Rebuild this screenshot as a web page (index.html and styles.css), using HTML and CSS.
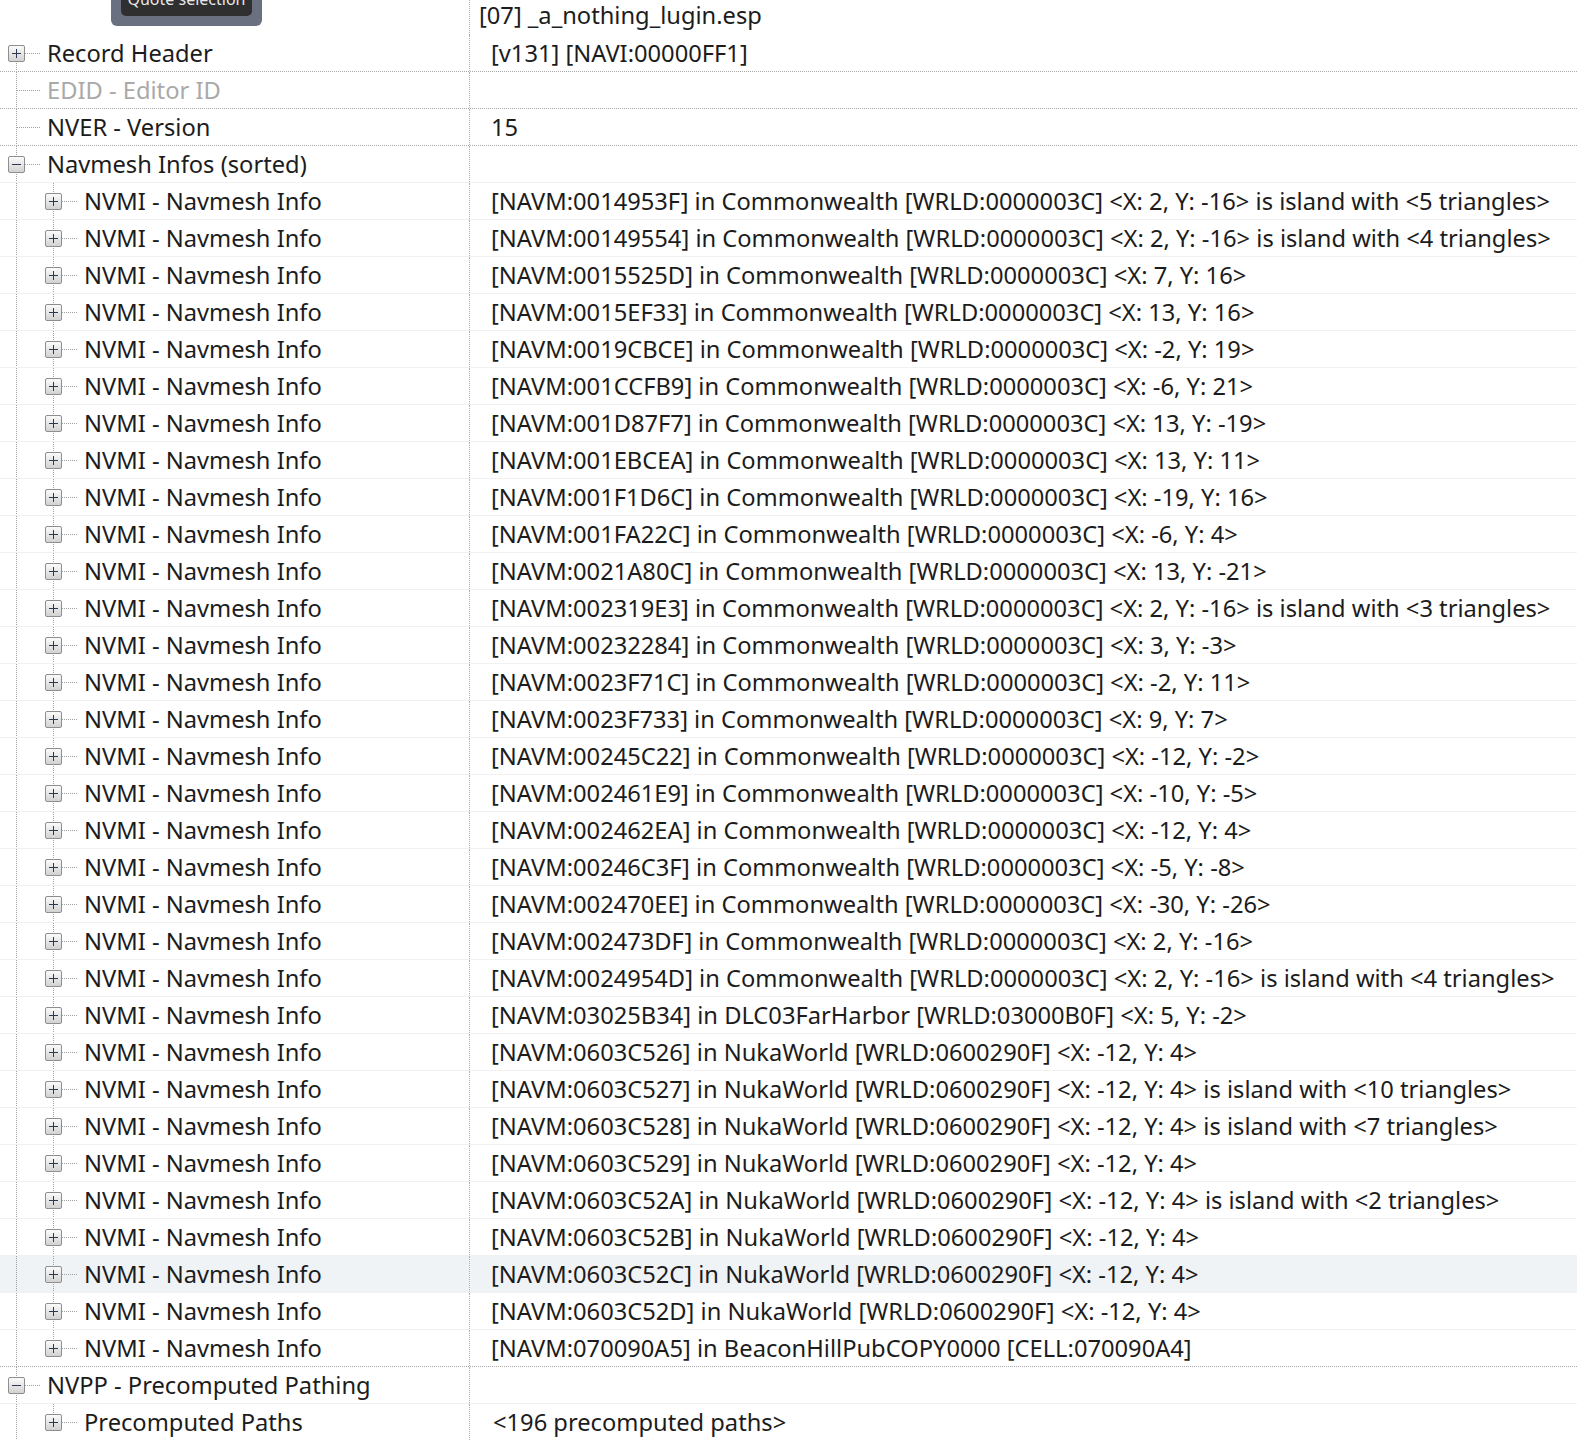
FILE: index.html
```html
<!DOCTYPE html>
<html lang="en">
<head>
<meta charset="utf-8">
<title>Record view</title>
<link rel="stylesheet" href="styles.css">
</head>
<body>
<div class="tooltip"><div class="tooltip-inner">Quote selection</div></div>
<div class="tree">
  <div class="row head"><div class="name"></div><div class="val val-head">[07] _a_nothing_lugin.esp</div></div>
  <div class="row dot"><div class="name"><span class="node n-bot"><span class="box plus"></span></span><span class="label">Record Header</span></div><div class="val">[v131] [NAVI:00000FF1]</div></div>
  <div class="row dot"><div class="name"><span class="node n-full"></span><span class="label dim">EDID - Editor ID</span></div><div class="val"></div></div>
  <div class="row dot"><div class="name"><span class="node n-full"></span><span class="label">NVER - Version</span></div><div class="val">15</div></div>
  <div class="row"><div class="name"><span class="node n-full"><span class="box minus"></span></span><span class="label">Navmesh Infos (sorted)</span></div><div class="val"></div></div>
  <div class="row"><div class="name"><span class="g"></span><span class="node n-full"><span class="box plus"></span></span><span class="label">NVMI - Navmesh Info</span></div><div class="val">[NAVM:0014953F] in Commonwealth [WRLD:0000003C] &lt;X: 2, Y: -16&gt; is island with &lt;5 triangles&gt;</div></div>
  <div class="row"><div class="name"><span class="g"></span><span class="node n-full"><span class="box plus"></span></span><span class="label">NVMI - Navmesh Info</span></div><div class="val">[NAVM:00149554] in Commonwealth [WRLD:0000003C] &lt;X: 2, Y: -16&gt; is island with &lt;4 triangles&gt;</div></div>
  <div class="row"><div class="name"><span class="g"></span><span class="node n-full"><span class="box plus"></span></span><span class="label">NVMI - Navmesh Info</span></div><div class="val">[NAVM:0015525D] in Commonwealth [WRLD:0000003C] &lt;X: 7, Y: 16&gt;</div></div>
  <div class="row"><div class="name"><span class="g"></span><span class="node n-full"><span class="box plus"></span></span><span class="label">NVMI - Navmesh Info</span></div><div class="val">[NAVM:0015EF33] in Commonwealth [WRLD:0000003C] &lt;X: 13, Y: 16&gt;</div></div>
  <div class="row"><div class="name"><span class="g"></span><span class="node n-full"><span class="box plus"></span></span><span class="label">NVMI - Navmesh Info</span></div><div class="val">[NAVM:0019CBCE] in Commonwealth [WRLD:0000003C] &lt;X: -2, Y: 19&gt;</div></div>
  <div class="row"><div class="name"><span class="g"></span><span class="node n-full"><span class="box plus"></span></span><span class="label">NVMI - Navmesh Info</span></div><div class="val">[NAVM:001CCFB9] in Commonwealth [WRLD:0000003C] &lt;X: -6, Y: 21&gt;</div></div>
  <div class="row"><div class="name"><span class="g"></span><span class="node n-full"><span class="box plus"></span></span><span class="label">NVMI - Navmesh Info</span></div><div class="val">[NAVM:001D87F7] in Commonwealth [WRLD:0000003C] &lt;X: 13, Y: -19&gt;</div></div>
  <div class="row"><div class="name"><span class="g"></span><span class="node n-full"><span class="box plus"></span></span><span class="label">NVMI - Navmesh Info</span></div><div class="val">[NAVM:001EBCEA] in Commonwealth [WRLD:0000003C] &lt;X: 13, Y: 11&gt;</div></div>
  <div class="row"><div class="name"><span class="g"></span><span class="node n-full"><span class="box plus"></span></span><span class="label">NVMI - Navmesh Info</span></div><div class="val">[NAVM:001F1D6C] in Commonwealth [WRLD:0000003C] &lt;X: -19, Y: 16&gt;</div></div>
  <div class="row"><div class="name"><span class="g"></span><span class="node n-full"><span class="box plus"></span></span><span class="label">NVMI - Navmesh Info</span></div><div class="val">[NAVM:001FA22C] in Commonwealth [WRLD:0000003C] &lt;X: -6, Y: 4&gt;</div></div>
  <div class="row"><div class="name"><span class="g"></span><span class="node n-full"><span class="box plus"></span></span><span class="label">NVMI - Navmesh Info</span></div><div class="val">[NAVM:0021A80C] in Commonwealth [WRLD:0000003C] &lt;X: 13, Y: -21&gt;</div></div>
  <div class="row"><div class="name"><span class="g"></span><span class="node n-full"><span class="box plus"></span></span><span class="label">NVMI - Navmesh Info</span></div><div class="val">[NAVM:002319E3] in Commonwealth [WRLD:0000003C] &lt;X: 2, Y: -16&gt; is island with &lt;3 triangles&gt;</div></div>
  <div class="row"><div class="name"><span class="g"></span><span class="node n-full"><span class="box plus"></span></span><span class="label">NVMI - Navmesh Info</span></div><div class="val">[NAVM:00232284] in Commonwealth [WRLD:0000003C] &lt;X: 3, Y: -3&gt;</div></div>
  <div class="row"><div class="name"><span class="g"></span><span class="node n-full"><span class="box plus"></span></span><span class="label">NVMI - Navmesh Info</span></div><div class="val">[NAVM:0023F71C] in Commonwealth [WRLD:0000003C] &lt;X: -2, Y: 11&gt;</div></div>
  <div class="row"><div class="name"><span class="g"></span><span class="node n-full"><span class="box plus"></span></span><span class="label">NVMI - Navmesh Info</span></div><div class="val">[NAVM:0023F733] in Commonwealth [WRLD:0000003C] &lt;X: 9, Y: 7&gt;</div></div>
  <div class="row"><div class="name"><span class="g"></span><span class="node n-full"><span class="box plus"></span></span><span class="label">NVMI - Navmesh Info</span></div><div class="val">[NAVM:00245C22] in Commonwealth [WRLD:0000003C] &lt;X: -12, Y: -2&gt;</div></div>
  <div class="row"><div class="name"><span class="g"></span><span class="node n-full"><span class="box plus"></span></span><span class="label">NVMI - Navmesh Info</span></div><div class="val">[NAVM:002461E9] in Commonwealth [WRLD:0000003C] &lt;X: -10, Y: -5&gt;</div></div>
  <div class="row"><div class="name"><span class="g"></span><span class="node n-full"><span class="box plus"></span></span><span class="label">NVMI - Navmesh Info</span></div><div class="val">[NAVM:002462EA] in Commonwealth [WRLD:0000003C] &lt;X: -12, Y: 4&gt;</div></div>
  <div class="row"><div class="name"><span class="g"></span><span class="node n-full"><span class="box plus"></span></span><span class="label">NVMI - Navmesh Info</span></div><div class="val">[NAVM:00246C3F] in Commonwealth [WRLD:0000003C] &lt;X: -5, Y: -8&gt;</div></div>
  <div class="row"><div class="name"><span class="g"></span><span class="node n-full"><span class="box plus"></span></span><span class="label">NVMI - Navmesh Info</span></div><div class="val">[NAVM:002470EE] in Commonwealth [WRLD:0000003C] &lt;X: -30, Y: -26&gt;</div></div>
  <div class="row"><div class="name"><span class="g"></span><span class="node n-full"><span class="box plus"></span></span><span class="label">NVMI - Navmesh Info</span></div><div class="val">[NAVM:002473DF] in Commonwealth [WRLD:0000003C] &lt;X: 2, Y: -16&gt;</div></div>
  <div class="row"><div class="name"><span class="g"></span><span class="node n-full"><span class="box plus"></span></span><span class="label">NVMI - Navmesh Info</span></div><div class="val">[NAVM:0024954D] in Commonwealth [WRLD:0000003C] &lt;X: 2, Y: -16&gt; is island with &lt;4 triangles&gt;</div></div>
  <div class="row"><div class="name"><span class="g"></span><span class="node n-full"><span class="box plus"></span></span><span class="label">NVMI - Navmesh Info</span></div><div class="val">[NAVM:03025B34] in DLC03FarHarbor [WRLD:03000B0F] &lt;X: 5, Y: -2&gt;</div></div>
  <div class="row"><div class="name"><span class="g"></span><span class="node n-full"><span class="box plus"></span></span><span class="label">NVMI - Navmesh Info</span></div><div class="val">[NAVM:0603C526] in NukaWorld [WRLD:0600290F] &lt;X: -12, Y: 4&gt;</div></div>
  <div class="row"><div class="name"><span class="g"></span><span class="node n-full"><span class="box plus"></span></span><span class="label">NVMI - Navmesh Info</span></div><div class="val">[NAVM:0603C527] in NukaWorld [WRLD:0600290F] &lt;X: -12, Y: 4&gt; is island with &lt;10 triangles&gt;</div></div>
  <div class="row"><div class="name"><span class="g"></span><span class="node n-full"><span class="box plus"></span></span><span class="label">NVMI - Navmesh Info</span></div><div class="val">[NAVM:0603C528] in NukaWorld [WRLD:0600290F] &lt;X: -12, Y: 4&gt; is island with &lt;7 triangles&gt;</div></div>
  <div class="row"><div class="name"><span class="g"></span><span class="node n-full"><span class="box plus"></span></span><span class="label">NVMI - Navmesh Info</span></div><div class="val">[NAVM:0603C529] in NukaWorld [WRLD:0600290F] &lt;X: -12, Y: 4&gt;</div></div>
  <div class="row"><div class="name"><span class="g"></span><span class="node n-full"><span class="box plus"></span></span><span class="label">NVMI - Navmesh Info</span></div><div class="val">[NAVM:0603C52A] in NukaWorld [WRLD:0600290F] &lt;X: -12, Y: 4&gt; is island with &lt;2 triangles&gt;</div></div>
  <div class="row"><div class="name"><span class="g"></span><span class="node n-full"><span class="box plus"></span></span><span class="label">NVMI - Navmesh Info</span></div><div class="val">[NAVM:0603C52B] in NukaWorld [WRLD:0600290F] &lt;X: -12, Y: 4&gt;</div></div>
  <div class="row hover"><div class="name"><span class="g"></span><span class="node n-full"><span class="box plus"></span></span><span class="label">NVMI - Navmesh Info</span></div><div class="val">[NAVM:0603C52C] in NukaWorld [WRLD:0600290F] &lt;X: -12, Y: 4&gt;</div></div>
  <div class="row"><div class="name"><span class="g"></span><span class="node n-full"><span class="box plus"></span></span><span class="label">NVMI - Navmesh Info</span></div><div class="val">[NAVM:0603C52D] in NukaWorld [WRLD:0600290F] &lt;X: -12, Y: 4&gt;</div></div>
  <div class="row dot"><div class="name"><span class="g"></span><span class="node n-top"><span class="box plus"></span></span><span class="label">NVMI - Navmesh Info</span></div><div class="val">[NAVM:070090A5] in BeaconHillPubCOPY0000 [CELL:070090A4]</div></div>
  <div class="row"><div class="name"><span class="node n-full"><span class="box minus"></span></span><span class="label">NVPP - Precomputed Pathing</span></div><div class="val"></div></div>
  <div class="row"><div class="name"><span class="g"></span><span class="node n-top"><span class="box plus"></span></span><span class="label">Precomputed Paths</span></div><div class="val val-paths">&lt;196 precomputed paths&gt;</div></div>
  <div class="row"><div class="name"><span class="g"></span></div><div class="val"></div></div>
</div>
</body>
</html>
```
FILE: styles.css
```css
html, body {
  margin: 0;
  padding: 0;
  background: #ffffff;
  overflow: hidden;
}
body {
  font-family: "Noto Sans", "Open Sans", sans-serif;
  font-size: 23.7px;
  color: #1c1c1c;
  position: relative;
  height: 1440px;
}
.tooltip {
  position: absolute;
  left: 111px;
  top: -22px;
  width: 151px;
  height: 48px;
  box-sizing: border-box;
  padding: 0 10px 10px;
  background: #6b7080;
  border-radius: 6px;
  z-index: 5;
}
.tooltip-inner {
  height: 38px;
  background: #2f2f30;
  border-radius: 5px;
  color: #e8e8e8;
  font-size: 16px;
  line-height: 42px;
  text-align: center;
  white-space: nowrap;
  overflow: hidden;
}
.tree {
  margin-top: -2px;
}
.row {
  display: grid;
  grid-template-columns: 470px 1fr;
  height: 37px;
  box-sizing: border-box;
  border-bottom: 1px solid #f1f1f1;
}
.row.head {
  border-bottom: none;
}
.row.dot {
  border-bottom: 1px dotted #a8a8a8;
}
.row.hover {
  background: #f0f3f6;
}
.name {
  display: flex;
  align-items: stretch;
  border-right: 1px dotted #b0b0b0;
  white-space: nowrap;
  overflow: hidden;
}
.g {
  flex: none;
  width: 37px;
  background: repeating-linear-gradient(to bottom, #a0a0a0 0 1px, transparent 1px 2px) 16px 0 / 1px 100% no-repeat;
}
.node {
  flex: none;
  width: 41px;
  display: flex;
  align-items: center;
}
.n-full {
  background:
    repeating-linear-gradient(to right, #a0a0a0 0 1px, transparent 1px 2px) 17px 50% / 24px 1px no-repeat,
    repeating-linear-gradient(to bottom, #a0a0a0 0 1px, transparent 1px 2px) 16px 0 / 1px 100% no-repeat;
}
.n-top {
  background:
    repeating-linear-gradient(to right, #a0a0a0 0 1px, transparent 1px 2px) 17px 50% / 24px 1px no-repeat,
    repeating-linear-gradient(to bottom, #a0a0a0 0 1px, transparent 1px 2px) 16px 0 / 1px 50% no-repeat;
}
.n-bot {
  background:
    repeating-linear-gradient(to right, #a0a0a0 0 1px, transparent 1px 2px) 17px 50% / 24px 1px no-repeat,
    repeating-linear-gradient(to bottom, #a0a0a0 0 1px, transparent 1px 2px) 16px 100% / 1px 50% no-repeat;
}
.box {
  margin-left: 8px;
  width: 17px;
  height: 17px;
  box-sizing: border-box;
  border: 1px solid #8e8e8e;
  border-radius: 2px;
  background:
    linear-gradient(#2b3a52, #2b3a52) 50% 50% / 9px 1px no-repeat,
    linear-gradient(to bottom, #fbfbfb, #d2d2d2);
}
.box.plus {
  background:
    linear-gradient(#2b3a52, #2b3a52) 50% 50% / 9px 1px no-repeat,
    linear-gradient(#2b3a52, #2b3a52) 50% 50% / 1px 9px no-repeat,
    linear-gradient(to bottom, #fbfbfb, #d2d2d2);
}
.label {
  margin-left: 6px;
  align-self: center;
}
.label.dim {
  color: #a9a9a9;
}
.val {
  padding-left: 21px;
  display: flex;
  align-items: center;
  white-space: nowrap;
}
.val-head {
  padding-left: 9px;
  padding-bottom: 4px;
}
.val-paths {
  padding-left: 23px;
}
```
